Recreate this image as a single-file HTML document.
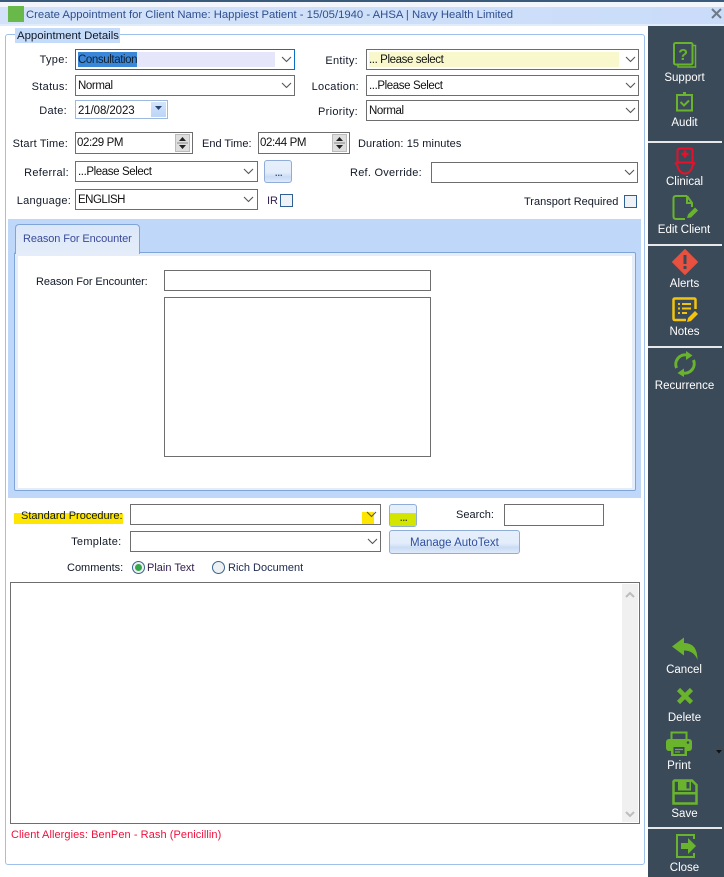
<!DOCTYPE html>
<html><head><meta charset="utf-8">
<style>
html,body{margin:0;padding:0;background:#fff}
#r{position:relative;width:724px;height:877px;overflow:hidden;background:#fff;font-family:"Liberation Sans",sans-serif;font-size:11px;color:#111827}
#r div,#r svg{position:absolute}
.t{white-space:nowrap;line-height:14px;margin-top:1px}
.n{margin-top:0}
.r{text-align:right}
.l{letter-spacing:.3px}
.f{background:#fff;border:1px solid #6e6e6e;box-sizing:border-box}
.v{white-space:nowrap;line-height:14px;font-size:11.5px;letter-spacing:-.4px;color:#111;margin-top:1px}
.b{box-sizing:border-box;border:1px solid #8fadd6;border-radius:3px;background:linear-gradient(#e6effb 0,#e3edfb 55%,#c9dcf5 75%,#dfe9f8 100%)}
.s{color:#fff;text-align:center;width:76px;left:646.500px;white-space:nowrap;line-height:14px;font-size:11.500px;margin-top:1px}
.c{border:1px solid #2f5f93;background:#eef1f6;box-sizing:border-box;width:13px;height:13px}
</style></head><body><div id="r">

<div style="left:0;top:0;width:724px;height:2px;background:#3a5a7c"></div>
<div style="left:0;top:2px;width:724px;height:5px;background:#f2f6fc"></div>
<div style="left:0;top:7px;width:724px;height:17px;background:linear-gradient(90deg,#d3e2f8,#c9dcf9)"></div>
<div style="left:0;top:24px;width:724px;height:2px;background:#e0ebfb"></div>
<div style="left:8px;top:6px;width:16px;height:16px;background:#69b84a"></div>
<div class="t" style="left:26px;top:7px;color:#2f4f8f;font-size:11.3px">Create Appointment for Client Name: Happiest Patient - 15/05/1940 - AHSA | Navy Health Limited</div>
<svg style="left:711px;top:8px" width="11" height="11" viewBox="0 0 11 11"><path d="M1 1L10 10M10 1L1 10" stroke="#6f7a88" stroke-width="2"/></svg>

<!-- group -->
<div style="left:5px;top:34px;width:640px;height:831px;box-sizing:border-box;border:1px solid #9fc0ea;border-radius:3px"></div>
<div style="left:15px;top:28px;width:105px;height:15px;background:#c4dcfa"></div>
<div class="t n" style="left:17px;top:29px;font-size:11.4px">Appointment Details</div>

<div class="t r l" style="left:20px;width:48px;top:52px">Type:</div>
<div class="f" style="left:75px;top:49px;width:220px;height:21px;border-color:#0d6fc4"></div>
<div style="left:78px;top:52px;width:197px;height:15px;background:#e6e6fa"></div>
<div style="left:78px;top:52px;width:59px;height:15px;background:#3a86d8"></div>
<div class="v" style="left:78px;top:52px;color:#123">Consultation</div>
<svg style="left:281px;top:56px" width="11" height="7"><path d="M1 1L5.500 5.500L10 1" fill="none" stroke="#555" stroke-width="1.100"/></svg>

<div class="t r l" style="left:20px;width:48px;top:79px">Status:</div>
<div class="f" style="left:75px;top:75px;width:220px;height:21px"></div>
<div class="v" style="left:78px;top:78px">Normal</div>
<svg style="left:281px;top:82px" width="11" height="7"><path d="M1 1L5.500 5.500L10 1" fill="none" stroke="#555" stroke-width="1.100"/></svg>

<div class="t r l n" style="left:20px;width:47px;top:104px">Date:</div>
<div class="f" style="left:75px;top:100px;width:93px;height:19px;border-color:#9db9de"></div>
<div class="v" style="left:78px;top:103px;letter-spacing:-.1px">21/08/2023</div>
<div style="left:151px;top:102px;width:15px;height:15px;background:linear-gradient(#d4e4fb,#bcd5f8)"></div>
<svg style="left:155px;top:106px" width="7" height="4"><path d="M0 0H7L3.500 4Z" fill="#25476f"/></svg>

<div class="t r" style="left:5px;width:63px;top:136px;letter-spacing:.2px">Start Time:</div>
<div class="f" style="left:75px;top:132px;width:118px;height:22px"></div>
<div class="v" style="left:77px;top:135px;letter-spacing:-.4px">02:29 PM</div>
<div style="left:175px;top:134px;width:15px;height:18px;background:#dedede;border:1px solid #bbb;box-sizing:border-box"></div>
<svg style="left:177px;top:136px" width="11" height="14"><path d="M5.500 1L9 5H2ZM2 9H9L5.500 13Z" fill="#222"/><path d="M0 7H11" stroke="#888"/></svg>

<div class="t" style="left:202px;top:136px">End Time:</div>
<div class="f" style="left:258px;top:132px;width:92px;height:22px"></div>
<div class="v" style="left:260px;top:135px;letter-spacing:-.4px">02:44 PM</div>
<div style="left:332px;top:134px;width:15px;height:18px;background:#dedede;border:1px solid #bbb;box-sizing:border-box"></div>
<svg style="left:334px;top:136px" width="11" height="14"><path d="M5.500 1L9 5H2ZM2 9H9L5.500 13Z" fill="#222"/><path d="M0 7H11" stroke="#888"/></svg>
<div class="t" style="left:358px;top:136px;letter-spacing:.1px">Duration: 15 minutes</div>

<div class="t r l" style="left:10px;width:59px;top:165px">Referral:</div>
<div class="f" style="left:75px;top:161px;width:183px;height:21px"></div>
<div class="v" style="left:78px;top:164px">...Please Select</div>
<svg style="left:243px;top:168px" width="11" height="7"><path d="M1 1L5.500 5.500L10 1" fill="none" stroke="#555" stroke-width="1.100"/></svg>
<div class="b" style="left:264px;top:160px;width:28px;height:23px"></div>
<div class="t n" style="left:275px;top:166px;font-size:9px;font-weight:bold;color:#2f4f8f">...</div>

<div class="t r" style="left:10px;width:61px;top:193px;letter-spacing:.25px">Language:</div>
<div class="f" style="left:75px;top:189px;width:183px;height:21px"></div>
<div class="v" style="left:78px;top:192px;letter-spacing:-.5px">ENGLISH</div>
<svg style="left:243px;top:196px" width="11" height="7"><path d="M1 1L5.500 5.500L10 1" fill="none" stroke="#555" stroke-width="1.100"/></svg>
<div class="t n" style="left:267px;top:194px;color:#33204f">IR</div>
<div class="c" style="left:280px;top:194px"></div>

<div class="t r l" style="left:310px;width:48px;top:53px">Entity:</div>
<div class="f" style="left:366px;top:49px;width:273px;height:21px"></div>
<div style="left:369px;top:52px;width:250px;height:15px;background:#f8f8cc"></div>
<div class="v" style="left:369px;top:52px">... Please select</div>
<svg style="left:625px;top:56px" width="11" height="7"><path d="M1 1L5.500 5.500L10 1" fill="none" stroke="#555" stroke-width="1.100"/></svg>

<div class="t r l" style="left:300px;width:59px;top:79px">Location:</div>
<div class="f" style="left:366px;top:75px;width:273px;height:21px"></div>
<div class="v" style="left:369px;top:78px">...Please Select</div>
<svg style="left:625px;top:82px" width="11" height="7"><path d="M1 1L5.500 5.500L10 1" fill="none" stroke="#555" stroke-width="1.100"/></svg>

<div class="t r l" style="left:300px;width:58px;top:104px">Priority:</div>
<div class="f" style="left:366px;top:100px;width:273px;height:21px"></div>
<div class="v" style="left:369px;top:103px">Normal</div>
<svg style="left:625px;top:107px" width="11" height="7"><path d="M1 1L5.500 5.500L10 1" fill="none" stroke="#555" stroke-width="1.100"/></svg>

<div class="t" style="left:350px;top:165px;letter-spacing:.25px">Ref. Override:</div>
<div class="f" style="left:431px;top:162px;width:207px;height:21px"></div>
<svg style="left:624px;top:169px" width="11" height="7"><path d="M1 1L5.500 5.500L10 1" fill="none" stroke="#555" stroke-width="1.100"/></svg>
<div class="t" style="left:524px;top:194px">Transport Required</div>
<div class="c" style="left:624px;top:195px"></div>

<!-- tab panel -->
<div style="left:8px;top:219px;width:633px;height:279px;background:#bfd8fa"></div>
<div style="left:14px;top:252px;width:622px;height:239px;box-sizing:border-box;border:1px solid #7fa5d8;border-radius:2px;background:#e4edf9"></div>
<div style="left:15px;top:224px;width:125px;height:30px;box-sizing:border-box;border:1px solid #7fa5d8;border-bottom:0;border-radius:4px 4px 0 0;background:linear-gradient(#dbe7f9,#e4edf9)"></div>
<div class="t n" style="left:23px;top:232px;color:#3b4a9a;letter-spacing:-.1px">Reason For Encounter</div>
<div style="left:18px;top:256px;width:614px;height:232px;background:#fff"></div>
<div class="t" style="left:36px;top:274px;letter-spacing:-.1px">Reason For Encounter:</div>
<div class="f" style="left:164px;top:270px;width:267px;height:21px"></div>
<div class="f" style="left:164px;top:297px;width:267px;height:160px"></div>

<!-- lower -->
<div style="left:14px;top:513px;width:109px;height:11px;background:#ffe600"></div>
<div class="t" style="left:21px;top:508px">Standard Procedure:</div>
<div class="f" style="left:130px;top:504px;width:251px;height:21px"></div>
<div style="left:362px;top:512px;width:12px;height:12px;background:#ffe600"></div>
<svg style="left:366px;top:511px" width="11" height="7"><path d="M1 1L5.500 5.500L10 1" fill="none" stroke="#555" stroke-width="1.100"/></svg>
<div class="b" style="left:389px;top:504px;width:28px;height:23px"></div>
<div style="left:390px;top:513px;width:26px;height:13px;background:#d4e600"></div>
<div class="t n" style="left:400px;top:511px;font-size:9px;font-weight:bold;color:#2a4a2a">...</div>
<div class="t" style="left:456px;top:507px">Search:</div>
<div class="f" style="left:504px;top:504px;width:100px;height:22px"></div>

<div class="t r l" style="left:60px;width:61.500px;top:534px">Template:</div>
<div class="f" style="left:130px;top:531px;width:251px;height:21px"></div>
<svg style="left:367px;top:538px" width="11" height="7"><path d="M1 1L5.500 5.500L10 1" fill="none" stroke="#555" stroke-width="1.100"/></svg>
<div class="b" style="left:389px;top:530px;width:131px;height:24px"></div>
<div class="t" style="left:410px;top:535px;color:#2f4f9f;font-size:11.500px">Manage AutoText</div>

<div class="t" style="left:67px;top:560px">Comments:</div>
<div style="left:132px;top:561px;width:13px;height:13px;box-sizing:border-box;border:1px solid #3a6390;border-radius:50%;background:#eef1f4"></div>
<div style="left:135px;top:564px;width:7px;height:7px;border-radius:50%;background:#35a84a"></div>
<div class="t" style="left:147px;top:560px;color:#33204f">Plain Text</div>
<div style="left:212px;top:561px;width:13px;height:13px;box-sizing:border-box;border:1px solid #3a6390;border-radius:50%;background:#eef1f4"></div>
<div class="t" style="left:228px;top:560px;color:#1b2a4f">Rich Document</div>

<div class="f" style="left:10px;top:582px;width:630px;height:242px"></div>
<div style="left:622px;top:584px;width:16px;height:238px;background:#f0f0f0"></div>
<svg style="left:625px;top:591px" width="10" height="7"><path d="M1 6L5 2L9 6" fill="none" stroke="#bdbdbd" stroke-width="2"/></svg>
<svg style="left:625px;top:811px" width="10" height="7"><path d="M1 1L5 5L9 1" fill="none" stroke="#bdbdbd" stroke-width="2"/></svg>
<div class="t" style="left:11px;top:827px;color:#f0103c;letter-spacing:.07px">Client Allergies: BenPen - Rash (Penicillin)</div>

<!-- sidebar -->
<div style="left:648px;top:26px;width:76px;height:851px;background:#3b4a58"></div>
<div style="left:648px;top:141px;width:74px;height:2px;background:#e6e8ea"></div>
<div style="left:648px;top:244px;width:74px;height:2px;background:#e6e8ea"></div>
<div style="left:648px;top:346px;width:74px;height:2px;background:#e6e8ea"></div>
<div style="left:648px;top:827px;width:74px;height:2px;background:#e6e8ea"></div>

<svg style="left:673px;top:42px" width="24" height="26" viewBox="0 0 24 26"><path d="M20.500 3.500H22.500V25H5V23" fill="none" stroke="#6ab42d" stroke-width="1.500"/><rect x="1" y="1" width="18.500" height="21.500" rx="1.500" fill="none" stroke="#6ab42d" stroke-width="2"/><text x="10.200" y="18" text-anchor="middle" font-family="Liberation Sans" font-weight="bold" font-size="16" fill="#6ab42d">?</text></svg>
<div class="s" style="top:70px">Support</div>
<svg style="left:676px;top:92px" width="18" height="20" viewBox="0 0 18 20"><rect x="1" y="3" width="15" height="15.500" fill="none" stroke="#6ab42d" stroke-width="2"/><rect x="7" y="0" width="3" height="4" fill="#6ab42d"/><path d="M4.500 10L8 13.500L13 8.500" fill="none" stroke="#6ab42d" stroke-width="2"/></svg>
<div class="s" style="top:115px">Audit</div>

<svg style="left:674px;top:147px" width="22" height="28" viewBox="0 0 22 28"><path d="M3.500 15.500V3.500Q3.500 1.500 6 1.500H16Q18.500 1.500 18.500 3.500V15.500Z" fill="none" stroke="#e8102a" stroke-width="2"/><path d="M11 3.500V10.500M7.500 7H14.500" stroke="#e8102a" stroke-width="2.500"/><path d="M1 15.500L3.500 18.500C4 23 7 26.500 11 26.500C15 26.500 18 23 18.500 18.500L21 15.500" fill="none" stroke="#e8102a" stroke-width="2"/></svg>
<div class="s" style="top:174px">Clinical</div>
<svg style="left:672px;top:195px" width="27" height="26" viewBox="0 0 27 26"><path d="M15 1H4Q1.500 1 1.500 3.500V21.500Q1.500 24 4 24H13M15 1L20 8V12M15 1V8H20" fill="none" stroke="#6ab42d" stroke-width="2"/><path d="M15 23L16 19.500L23 12.500L26 15.500L19 22.500Z" fill="#6ab42d"/></svg>
<div class="s" style="top:222px;left:646px">Edit Client</div>

<svg style="left:672px;top:249px" width="26" height="26" viewBox="0 0 26 26"><path d="M13 0.500L25.500 13L13 25.500L0.500 13Z" fill="#e8503f" stroke="#e8503f" stroke-linejoin="round" stroke-width="1"/><rect x="11.500" y="6" width="3" height="9" fill="#3b4a58"/><rect x="11.500" y="17" width="3" height="3" fill="#3b4a58"/></svg>
<div class="s" style="top:276px">Alerts</div>
<svg style="left:672px;top:297px" width="27" height="27" viewBox="0 0 27 27"><path d="M14 23H3Q1.500 23 1.500 21.500V3Q1.500 1.500 3 1.500H22Q23.500 1.500 23.500 3V12" fill="none" stroke="#f2c40f" stroke-width="2.500"/><path d="M6 7H8M10 7H19M6 11.500H8M10 11.500H19M6 16H8M10 16H15" stroke="#f2c40f" stroke-width="2"/><path d="M15 25L16 21L23 14L26 17L19 24Z" fill="#f2c40f"/></svg>
<div class="s" style="top:324px">Notes</div>

<svg style="left:673px;top:351px" width="24" height="26" viewBox="0 0 24 26"><path d="M3.500 17A9.500 9.500 0 0 1 14 4" fill="none" stroke="#6ab42d" stroke-width="3"/><path d="M13 0L19.500 4.500L13 9Z" fill="#6ab42d"/><path d="M20.500 9A9.500 9.500 0 0 1 10 22" fill="none" stroke="#6ab42d" stroke-width="3"/><path d="M11 17.500L4.500 22L11 26Z" fill="#6ab42d"/></svg>
<div class="s" style="top:378px">Recurrence</div>

<svg style="left:672px;top:637px" width="26" height="24" viewBox="0 0 26 24"><path d="M0 9.500L12 0.500V6Q25.500 6 25.500 23Q22 13.500 12 13.500V18.500Z" fill="#6ab42d"/></svg>
<div class="s" style="top:662px;left:646px">Cancel</div>
<svg style="left:676px;top:687px" width="18" height="18" viewBox="0 0 18 18"><path d="M2.500 2.500L15.500 15.500M15.500 2.500L2.500 15.500" stroke="#6ab42d" stroke-width="4.500"/></svg>
<div class="s" style="top:710px">Delete</div>
<svg style="left:666px;top:731px" width="26" height="26" viewBox="0 0 26 26"><path d="M5.500 9V1.500H20.500V9" fill="none" stroke="#6ab42d" stroke-width="2"/><rect x="0" y="8" width="26" height="12" rx="3" fill="#6ab42d"/><rect x="5" y="14" width="16" height="11" fill="#6ab42d"/><rect x="7.500" y="16" width="11" height="7" fill="#3b4a58"/><path d="M9 18.500H17M9 21H14" stroke="#6ab42d" stroke-width="1.300"/><circle cx="22" cy="11.500" r="1.300" fill="#3b4a58"/></svg>
<div class="s" style="top:758px;left:641px">Print</div>
<svg style="left:716px;top:750px" width="6" height="4"><path d="M0 0H6L3 3.500Z" fill="#111"/></svg>
<svg style="left:672px;top:779px" width="26" height="26" viewBox="0 0 26 26"><path d="M2.500 1.500H20L24.500 6V24.500H1.500V2.500Z" fill="none" stroke="#6ab42d" stroke-width="2.500"/><rect x="1.500" y="13" width="23" height="2.500" fill="#6ab42d"/><rect x="6" y="1.500" width="13" height="10" fill="#6ab42d"/><rect x="14.500" y="3" width="3" height="6.500" fill="#3b4a58"/></svg>
<div class="s" style="top:806px">Save</div>
<svg style="left:675px;top:833px" width="22" height="26" viewBox="0 0 22 26"><path d="M19 6V2H2V24H19V20" fill="none" stroke="#6ab42d" stroke-width="2"/><path d="M6 10H13V5L21 13L13 21V16H6Z" fill="#6ab42d"/></svg>
<div class="s" style="top:860px">Close</div>

</div></body></html>
